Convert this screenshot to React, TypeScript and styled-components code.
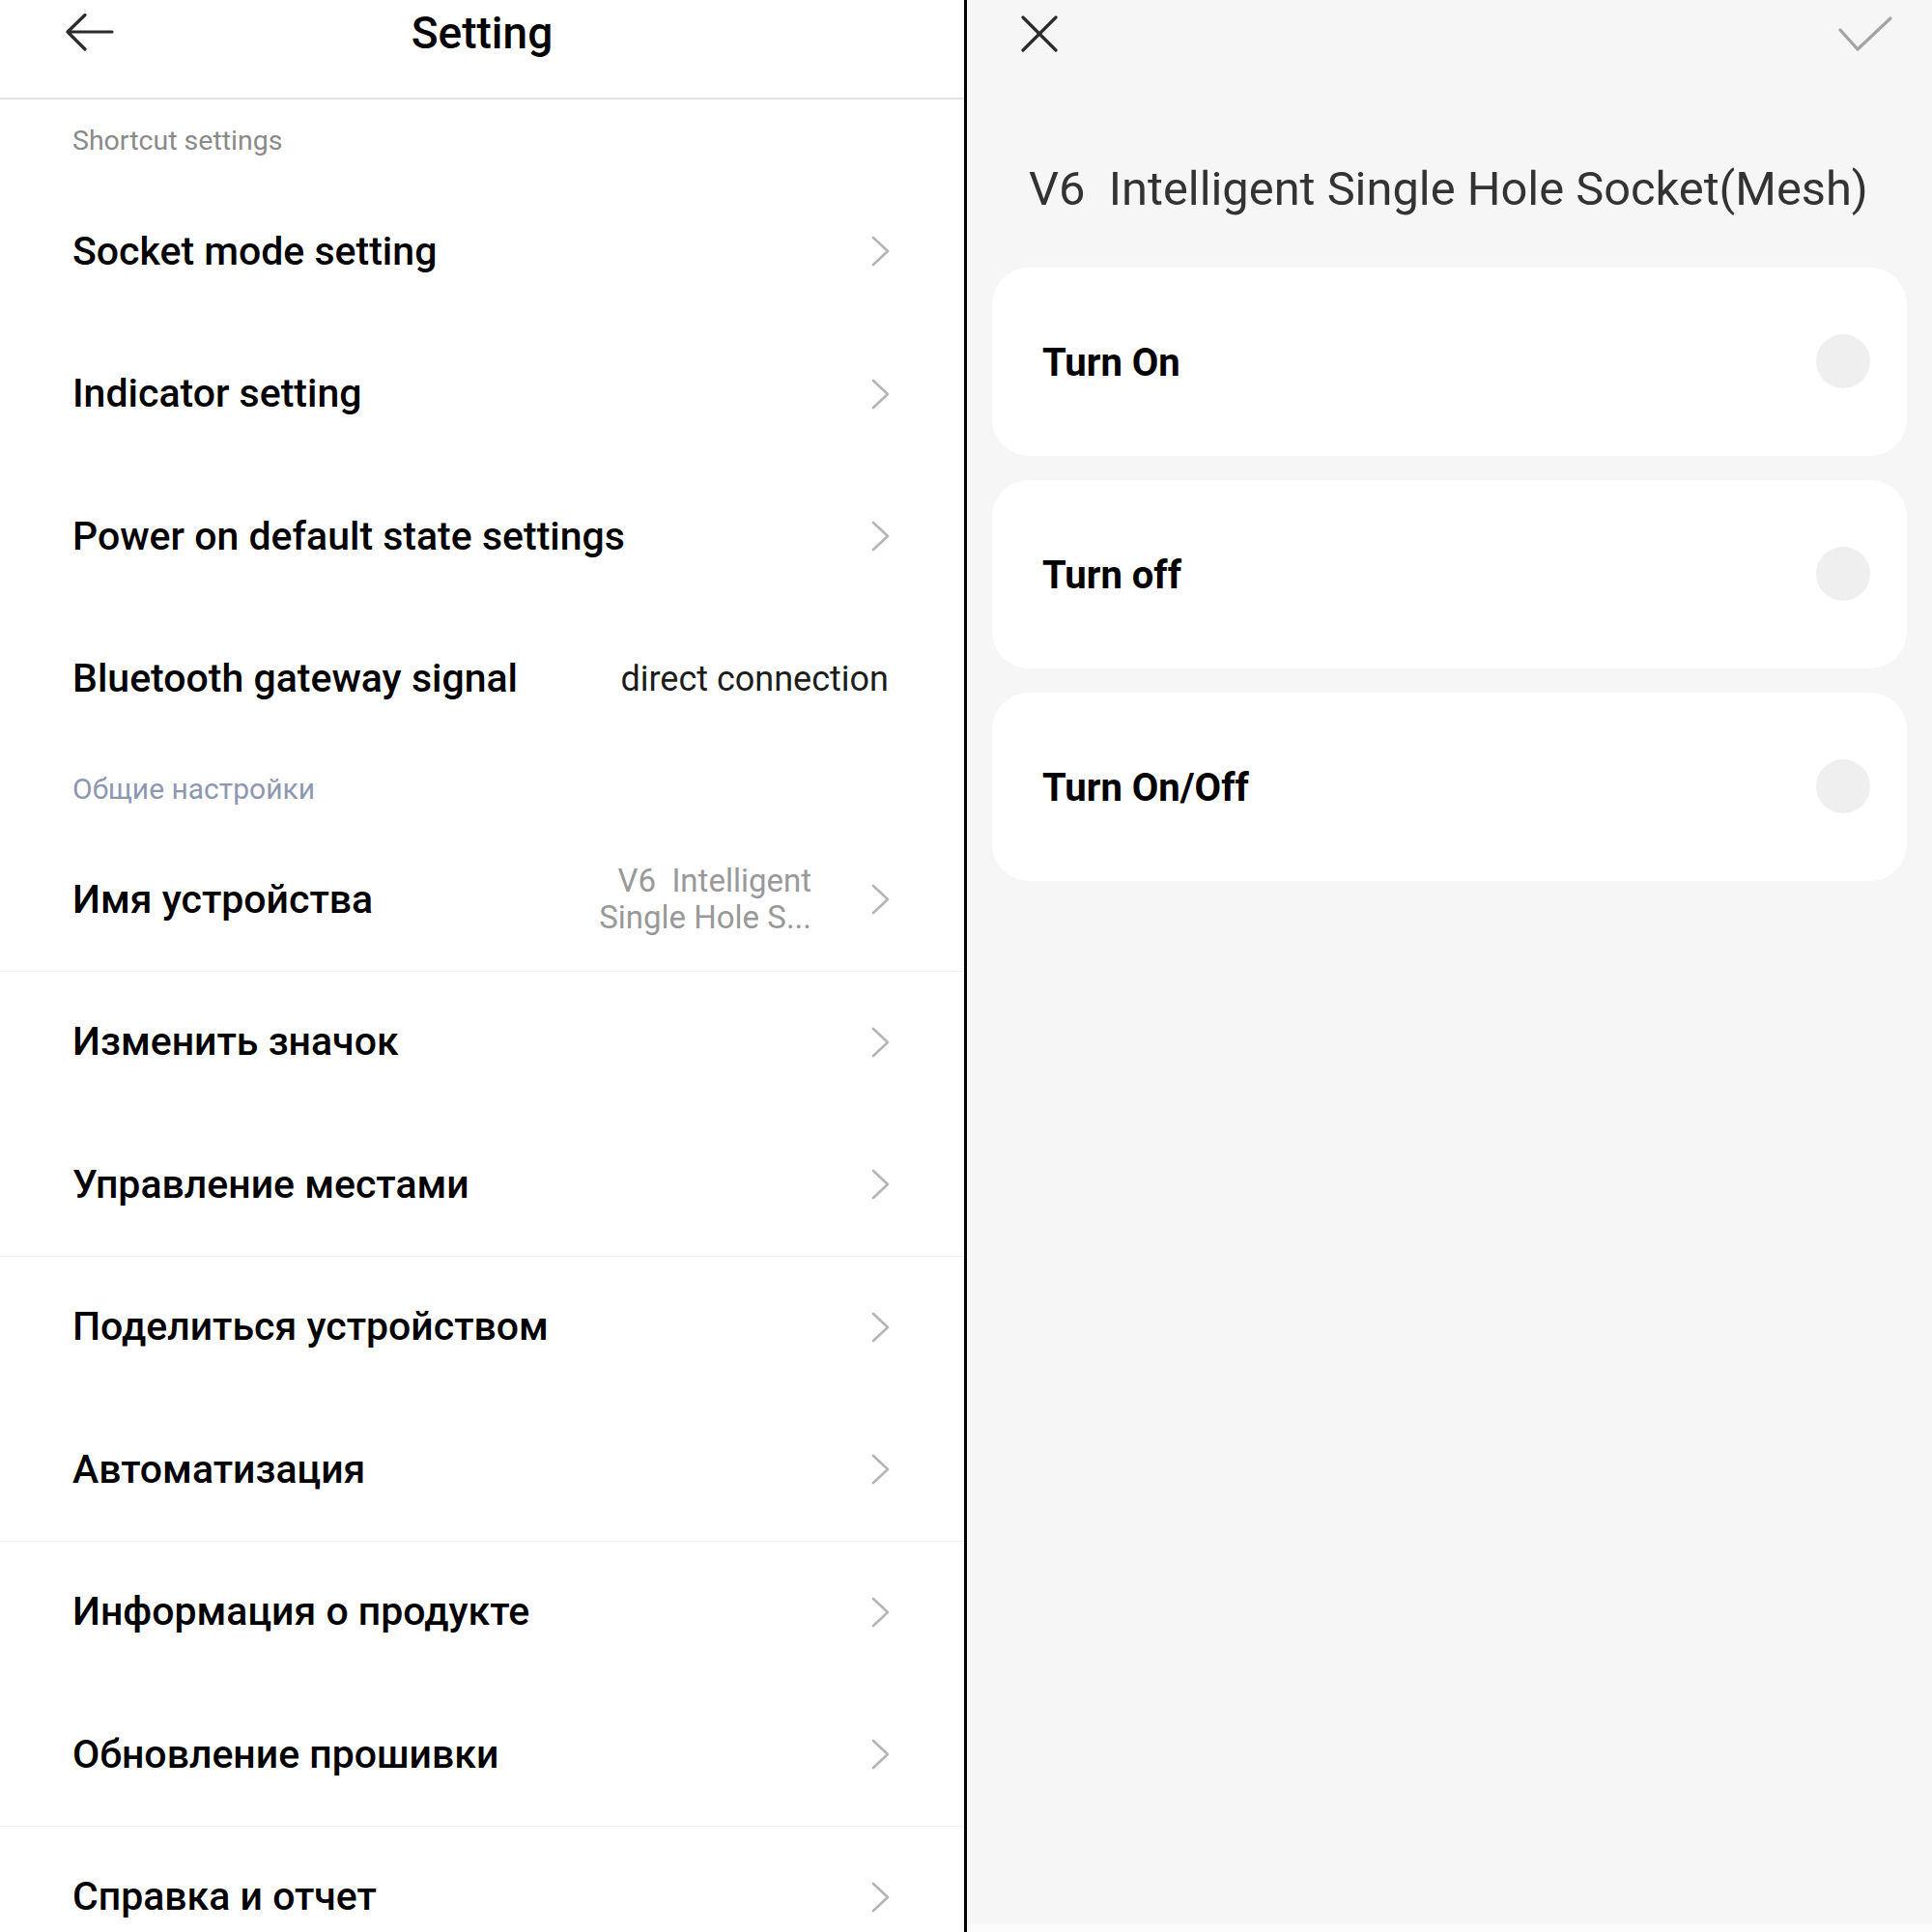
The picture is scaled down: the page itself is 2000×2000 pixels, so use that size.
import React from "react";
import styled, { createGlobalStyle } from "styled-components";

const GlobalStyle = createGlobalStyle`
	html, body {
		margin: 0;
		padding: 0;
		background: #ffffff;
	}
	body {
		font-family: Roboto, "Noto Sans", "Liberation Sans", sans-serif;
		-webkit-font-smoothing: antialiased;
	}
`;

const Page = styled.div`
	display: flex;
	width: 2000px;
	height: 2000px;
	overflow: hidden;
`;

const LeftPanel = styled.section`
	width: 998px;
	flex: none;
	background: #ffffff;
	border-right: 3px solid #000000;
	display: flex;
	flex-direction: column;
`;

const RightPanel = styled.section`
	flex: 1;
	background: #f6f6f6;
	border-bottom: 8px solid #fcfcfc;
	display: flex;
	flex-direction: column;
`;

const Header = styled.header`
	height: 101px;
	border-bottom: 2px solid #e3e3e3;
	display: grid;
	grid-template-columns: 1fr auto 1fr;
	grid-template-rows: 68px;
	align-items: center;
	flex: none;
`;

const HeaderTitle = styled.h1`
	margin: 0;
	font-size: 46px;
	line-height: 1;
	font-weight: 500;
	color: #000000;
`;

const IconButton = styled.div<{ $align?: "start" | "end"; $inset: number }>`
	display: flex;
	align-items: center;
	justify-content: ${(p) => (p.$align === "end" ? "flex-end" : "flex-start")};
	padding-left: ${(p) => (p.$align === "end" ? 0 : p.$inset)}px;
	padding-right: ${(p) => (p.$align === "end" ? p.$inset : 0)}px;
	svg {
		display: block;
	}
`;

const SectionLabel = styled.div<{ $tone?: "grey" | "blue" }>`
	padding: ${(p) => (p.$tone === "blue" ? 26 : 29)}px 75px 28px;
	font-size: ${(p) => (p.$tone === "blue" ? 30 : 28.5)}px;
	line-height: 27px;
	color: ${(p) => (p.$tone === "blue" ? "#8e97b1" : "#8a8a8a")};
`;

const Row = styled.div<{ $divided?: boolean }>`
	height: 147.5px;
	box-sizing: border-box;
	padding: 0 76px 0 75px;
	display: flex;
	align-items: center;
	gap: 24px;
	flex: none;
	border-bottom: 1px solid ${(p) => (p.$divided ? "#f1f1f1" : "transparent")};
`;

const RowLabel = styled.span`
	flex: 1;
	font-size: 41px;
	line-height: 1;
	font-weight: 500;
	color: #000000;
	white-space: nowrap;
`;

const RowValue = styled.span`
	font-size: 36px;
	line-height: 1;
	color: #1c1c1c;
	white-space: nowrap;
	margin-right: 2px;
`;

const RowValueMuted = styled.span`
	display: flex;
	flex-direction: column;
	align-items: flex-end;
	font-size: 33px;
	line-height: 38px;
	color: #999999;
	white-space: pre;
	margin-right: 38px;
`;

const TopBar = styled.div`
	height: 70px;
	display: flex;
	justify-content: space-between;
	align-items: center;
	flex: none;
`;

const DialogTitle = styled.h2`
	margin: 102px 0 56px;
	padding-left: 64px;
	font-size: 48.8px;
	line-height: 1;
	font-weight: 400;
	color: #333333;
	white-space: pre;
`;

const OptionList = styled.div`
	display: flex;
	flex-direction: column;
	gap: 25px;
	padding: 0 26px;
`;

const OptionCard = styled.div`
	height: 195px;
	background: #ffffff;
	border-radius: 38px;
	display: flex;
	align-items: center;
	justify-content: space-between;
	padding: 0 38px 0 52px;
`;

const OptionText = styled.span`
	font-size: 40px;
	line-height: 1;
	font-weight: 700;
	color: #000000;
	margin-top: 3px;
`;

const Radio = styled.span`
	width: 56px;
	height: 56px;
	border-radius: 50%;
	background: #efefef;
`;

const Chevron = () => (
	<svg width="20" height="32" viewBox="0 0 20 32">
		<polyline
			points="2,2 17,16 2,30"
			fill="none"
			stroke="#b5b5b5"
			strokeWidth="2.6"
			strokeLinecap="round"
			strokeLinejoin="round"
		/>
	</svg>
);

const BackArrow = () => (
	<svg width="50" height="40" viewBox="0 0 50 40">
		<path
			d="M2 19 H48 M2 19 L20 1.5 M2 19 L20 37"
			fill="none"
			stroke="#2b2b2b"
			strokeWidth="3.2"
			strokeLinecap="round"
		/>
	</svg>
);

const CloseIcon = () => (
	<svg width="38" height="38" viewBox="0 0 38 38">
		<path
			d="M2 2 L36 36 M36 2 L2 36"
			fill="none"
			stroke="#2b2b2b"
			strokeWidth="3.2"
			strokeLinecap="round"
		/>
	</svg>
);

const CheckIcon = () => (
	<svg width="56" height="36" viewBox="0 0 56 36">
		<polyline
			points="2,14 20,34 54,2"
			fill="none"
			stroke="#a3a3a3"
			strokeWidth="3.2"
			strokeLinecap="round"
			strokeLinejoin="round"
		/>
	</svg>
);

const shortcutRows = [
	{ label: "Socket mode setting", chevron: true },
	{ label: "Indicator setting", chevron: true },
	{ label: "Power on default state settings", chevron: true },
	{ label: "Bluetooth gateway signal", value: "direct connection" },
];

const generalRows = [
	{ label: "Имя устройства", muted: ["V6  Intelligent", "Single Hole S..."], divided: true },
	{ label: "Изменить значок" },
	{ label: "Управление местами", divided: true },
	{ label: "Поделиться устройством" },
	{ label: "Автоматизация", divided: true },
	{ label: "Информация о продукте" },
	{ label: "Обновление прошивки", divided: true },
	{ label: "Справка и отчет" },
];

const options = ["Turn On", "Turn off", "Turn On/Off"];

export default function App() {
	return (
		<>
			<GlobalStyle />
			<Page>
				<LeftPanel>
					<Header>
						<IconButton $inset={68}>
							<BackArrow />
						</IconButton>
						<HeaderTitle>Setting</HeaderTitle>
						<div />
					</Header>

					<SectionLabel>Shortcut settings</SectionLabel>
					{shortcutRows.map((row) => (
						<Row key={row.label}>
							<RowLabel>{row.label}</RowLabel>
							{row.value && <RowValue>{row.value}</RowValue>}
							{row.chevron && <Chevron />}
						</Row>
					))}

					<SectionLabel $tone='blue'>Общие настройки</SectionLabel>
					{generalRows.map((row) => (
						<Row key={row.label} $divided={row.divided}>
							<RowLabel>{row.label}</RowLabel>
							{row.muted && (
								<RowValueMuted>
									{row.muted.map((line) => (
										<span key={line}>{line}</span>
									))}
								</RowValueMuted>
							)}
							<Chevron />
						</Row>
					))}
				</LeftPanel>

				<RightPanel>
					<TopBar>
						<IconButton $inset={56}>
							<CloseIcon />
						</IconButton>
						<IconButton $align='end' $inset={41}>
							<CheckIcon />
						</IconButton>
					</TopBar>
					<DialogTitle>{"V6  Intelligent Single Hole Socket(Mesh)"}</DialogTitle>
					<OptionList>
						{options.map((option) => (
							<OptionCard key={option}>
								<OptionText>{option}</OptionText>
								<Radio />
							</OptionCard>
						))}
					</OptionList>
				</RightPanel>
			</Page>
		</>
	);
}
